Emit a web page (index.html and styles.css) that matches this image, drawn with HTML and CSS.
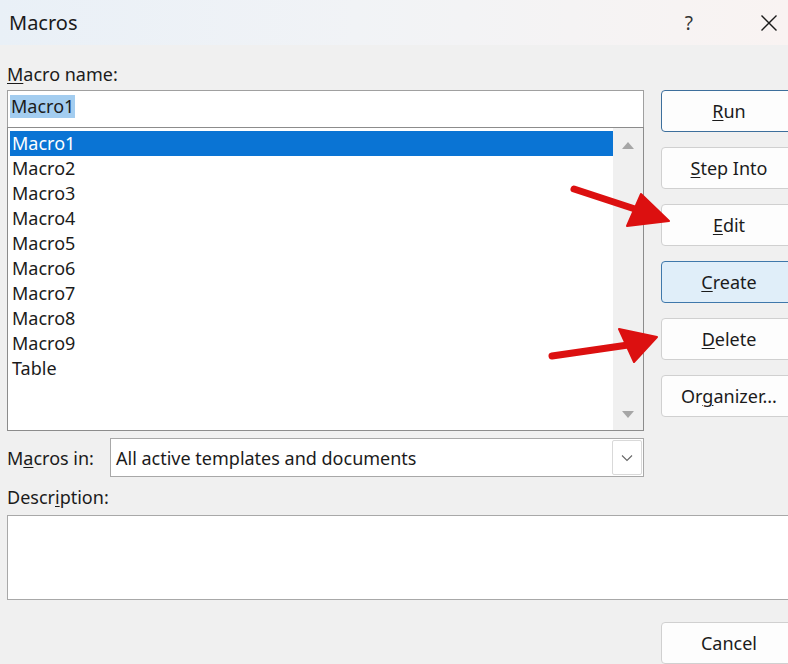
FILE: index.html
```html
<!DOCTYPE html>
<html lang="en">
<head>
  <meta charset="UTF-8">
  <title>Macros</title>
  <link rel="stylesheet" href="styles.css">
</head>
<body>
  <div class="dialog">
    <div class="titlebar">
      <span class="title">Macros</span>
      <span class="help">?</span>
      <svg class="close" width="18" height="18" viewBox="0 0 18 18">
        <path d="M1.5 1.5 L16.5 16.5 M16.5 1.5 L1.5 16.5" stroke="#1a1a1a" stroke-width="1.4" fill="none"/>
      </svg>
    </div>

    <div class="content">
      <div class="top">
        <div class="left">
          <label class="label"><u>M</u>acro name:</label>
          <div class="name-input"><span class="sel">Macro1</span></div>
          <div class="listbox">
            <ul class="items">
              <li class="selected">Macro1</li>
              <li>Macro2</li>
              <li>Macro3</li>
              <li>Macro4</li>
              <li>Macro5</li>
              <li>Macro6</li>
              <li>Macro7</li>
              <li>Macro8</li>
              <li>Macro9</li>
              <li>Table</li>
            </ul>
            <div class="scrollbar">
              <span class="arrow up"></span>
              <span class="arrow down"></span>
            </div>
          </div>
          <div class="macros-in">
            <label class="label">M<u>a</u>cros in:</label>
            <div class="combo">
              <span>All active templates and documents</span>
              <span class="drop">
                <svg width="12" height="8" viewBox="0 0 12 8">
                  <path d="M1 1.5 L6 6.5 L11 1.5" stroke="#666" stroke-width="1.1" fill="none"/>
                </svg>
              </span>
            </div>
          </div>
        </div>

        <div class="buttons">
          <button class="btn default"><u>R</u>un</button>
          <button class="btn"><u>S</u>tep Into</button>
          <button class="btn"><u>E</u>dit</button>
          <button class="btn focused"><u>C</u>reate</button>
          <button class="btn"><u>D</u>elete</button>
          <button class="btn">Or<u>g</u>anizer...</button>
        </div>
      </div>

      <label class="label desc-label">Descr<u>i</u>ption:</label>
      <div class="desc-box"></div>

      <div class="footer">
        <button class="btn">Cancel</button>
      </div>
    </div>

    <!-- annotation arrows drawn over the dialog -->
    <svg class="arrows" width="788" height="664" viewBox="0 0 788 664">
      <g fill="#dc1010" stroke="#dc1010" stroke-linecap="round" stroke-linejoin="round">
        <line x1="574" y1="189" x2="638" y2="210" stroke-width="7"/>
        <polygon points="669,221 641,194 627,226" stroke-width="2"/>
        <line x1="552" y1="356" x2="628" y2="345" stroke-width="7"/>
        <polygon points="657,337 619,329 634,362" stroke-width="2"/>
      </g>
    </svg>
  </div>
</body>
</html>
```

FILE: styles.css
```css
body {
  margin: 0;
  width: 788px;
  height: 664px;
  overflow: hidden;
  background-color: #f0f0f0;
  font-family: "Noto Sans", "Open Sans", sans-serif;
  font-size: 18px;
  color: #1b1b1b;
}
u {
  text-decoration-thickness: 1px;
  text-underline-offset: 2px;
}
.dialog {
  position: relative;
  width: 788px;
  height: 664px;
}
.titlebar {
  height: 45px;
  display: flex;
  align-items: center;
  padding-left: 9px;
  background: linear-gradient(90deg, #e9f0f7 0%, #f1f3f6 45%, #f9f3f2 100%);
}
.title {
  font-size: 20px;
  flex: 1;
}
.help {
  font-size: 19px;
  color: #333;
  margin-right: 67px;
}
.close {
  margin-right: 10px;
}
.content {
  width: 790px;
  padding-left: 7px;
}
.top {
  display: flex;
  gap: 17px;
  margin-top: 17px;
}
.left {
  width: 637px;
}
.label {
  display: block;
  line-height: 24px;
}
.name-input {
  margin-top: 4px;
  height: 37px;
  box-sizing: border-box;
  background-color: white;
  border: 1px solid #a0a0a0;
  border-bottom: none;
  padding: 3px 2px;
}
.sel {
  display: inline-block;
  line-height: 23px;
  padding: 0 1px;
  background-color: #a3cdf0;
}
.listbox {
  display: flex;
  height: 304px;
  box-sizing: border-box;
  border: 1px solid #8c8c8c;
  background-color: white;
}
.items {
  flex: 1;
  list-style: none;
  margin: 0;
  padding: 3px 0 0 2px;
}
.items li {
  height: 25px;
  line-height: 25px;
  padding-left: 2px;
}
.items li.selected {
  background-color: #0a74d4;
  color: white;
}
.scrollbar {
  width: 30px;
  background-color: #f0f0f0;
  display: flex;
  flex-direction: column;
  justify-content: space-between;
  align-items: center;
  padding: 14px 0 12px;
}
.arrow {
  width: 0;
  height: 0;
  border-left: 6px solid transparent;
  border-right: 6px solid transparent;
}
.arrow.up {
  border-bottom: 7px solid #a6a6a6;
}
.arrow.down {
  border-top: 7px solid #a6a6a6;
}
.macros-in {
  display: flex;
  align-items: center;
  margin-top: 7px;
}
.macros-in .label {
  width: 103px;
}
.combo {
  position: relative;
  flex: 1;
  height: 39px;
  box-sizing: border-box;
  border: 1px solid #a8a8a8;
  background-color: white;
  display: flex;
  align-items: center;
  padding-left: 5px;
}
.combo span:first-child {
  flex: 1;
}
.drop {
  width: 30px;
  height: 35px;
  box-sizing: border-box;
  margin-right: 1px;
  border: 1px solid #d9d9d9;
  border-radius: 2px;
  display: flex;
  align-items: center;
  justify-content: center;
}
.buttons {
  width: 136px;
  padding-top: 28px;
  display: flex;
  flex-direction: column;
  gap: 15px;
}
.btn {
  height: 42px;
  width: 136px;
  box-sizing: border-box;
  background-color: #fdfdfd;
  border: 1px solid #d0d0d0;
  border-radius: 4px;
  font-family: inherit;
  font-size: 18px;
  color: #1b1b1b;
  cursor: pointer;
}
.btn.default {
  border-color: #3d6f9c;
}
.btn.focused {
  background-color: #e0eef9;
  border-color: #3f78ab;
}
.desc-label {
  margin-top: 8px;
}
.desc-box {
  margin-top: 6px;
  height: 85px;
  box-sizing: border-box;
  border: 1px solid #a8a8a8;
  background-color: white;
}
.footer {
  display: flex;
  justify-content: flex-end;
  margin-top: 22px;
}
.arrows {
  position: absolute;
  left: 0;
  top: 0;
  pointer-events: none;
}
```
